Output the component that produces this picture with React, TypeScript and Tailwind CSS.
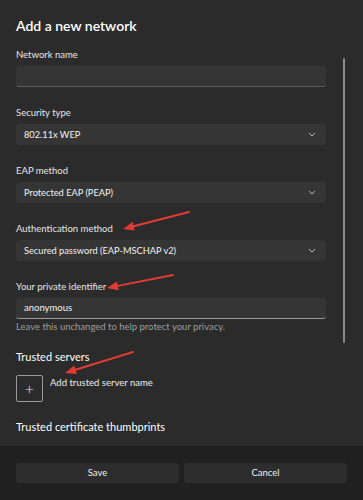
import React from "react";

const font = { fontFamily: "Lato, 'Noto Sans', sans-serif" };

// small chevron used by the dropdowns
const Chevron = () => (
  <svg width="8" height="5" viewBox="0 0 8 5" className="text-[#bdbdbd]">
    <path d="M1 1l3 3 3-3" fill="none" stroke="currentColor" strokeWidth="1" />
  </svg>
);

const Label = ({ children }: { children: React.ReactNode }) => (
  <div className="h-4 text-[9.5px] leading-4 text-[#e6e6e6]">{children}</div>
);

const Select = ({ value }: { value: string }) => (
  <div className="mt-[3px] flex h-[21px] w-[310px] items-center justify-between rounded-[3px] bg-[#353535] pl-2 pr-[10px] text-[9.25px] text-[#f2f2f2]">
    <span>{value}</span>
    <Chevron />
  </div>
);

const Input = ({ value, filled }: { value?: string; filled?: boolean }) => (
  <div
    className={`mt-[3px] flex h-[21px] w-[310px] items-center rounded-[3px] border-b bg-[#353535] px-2 text-[9.5px] text-[#f2f2f2] ${
      filled ? "border-[#9a9a9a]" : "border-[#5e5e5e]"
    }`}
  >
    {value}
  </div>
);

const Arrow = ({ x1, y1, x2, y2 }: { x1: number; y1: number; x2: number; y2: number }) => {
  const a = Math.atan2(y2 - y1, x2 - x1);
  const len = 11;
  const w = 4.5;
  const bx = x2 - len * Math.cos(a);
  const by = y2 - len * Math.sin(a);
  const p1 = `${bx + w * Math.sin(a)},${by - w * Math.cos(a)}`;
  const p2 = `${bx - w * Math.sin(a)},${by + w * Math.cos(a)}`;
  return (
    <g>
      <line x1={x1} y1={y1} x2={bx} y2={by} stroke="#e23b36" strokeWidth="2" strokeLinecap="round" />
      <polygon points={`${x2},${y2} ${p1} ${p2}`} fill="#e23b36" />
    </g>
  );
};

export default function App() {
  return (
    <div className="relative flex h-[500px] w-[363px] flex-col overflow-hidden bg-[#2b2b2b]" style={font}>
      {/* scrolling body */}
      <div className="relative flex-1 overflow-hidden pl-4">
        <h1 className="mt-[14px] h-6 text-[14px] font-semibold leading-6 text-white">Add a new network</h1>

        <div className="mt-[9px]">
          <Label>Network name</Label>
          <Input />
        </div>
        <div className="mt-[18px]">
          <Label>Security type</Label>
          <Select value="802.11x WEP" />
        </div>
        <div className="mt-[18px]">
          <Label>EAP method</Label>
          <Select value="Protected EAP (PEAP)" />
        </div>
        <div className="mt-[18px]">
          <Label>Authentication method</Label>
          <Select value="Secured password (EAP-MSCHAP v2)" />
        </div>
        <div className="mt-[18px]">
          <Label>Your private identifier</Label>
          <Input value="anonymous" filled />
          <div className="h-4 text-[9.5px] leading-4 text-[#9e9e9e]">Leave this unchanged to help protect your privacy.</div>
        </div>

        <div className="mt-3 h-5 text-[11px] leading-5 text-white">Trusted servers</div>
        <div className="mt-2 flex items-start gap-[7px]">
          <div className="flex h-[27px] w-[27px] items-center justify-center rounded-[2px] border border-[#9a9a9a] text-[16px] font-light leading-none text-[#e0e0e0]">
            +
          </div>
          <span className="text-[9.5px] leading-4 text-[#ececec]">Add trusted server name</span>
        </div>
        <div className="mt-[15px] h-5 text-[11px] leading-5 text-white">Trusted certificate thumbprints</div>

        {/* scrollbar */}
        <div className="absolute left-[343px] top-[58px] h-[285px] w-[2px] rounded-full bg-[#8a8a8a]" />
      </div>

      {/* footer */}
      <div className="flex h-[54px] shrink-0 gap-[5px] bg-[#202020] px-4 pt-[17px]">
        <button className="h-5 flex-1 rounded-[3px] bg-[#2d2d2d] text-[9.5px] text-[#f0f0f0]">Save</button>
        <button className="h-5 flex-1 rounded-[3px] bg-[#2d2d2d] text-[9.5px] text-[#f0f0f0]">Cancel</button>
      </div>

      {/* annotation arrows */}
      <svg className="pointer-events-none absolute inset-0" width="363" height="500">
        <Arrow x1={189} y1={212} x2={123} y2={229} />
        <Arrow x1={173} y1={275} x2={107} y2={288} />
        <Arrow x1={133} y1={352} x2={65} y2={373} />
      </svg>
    </div>
  );
}
